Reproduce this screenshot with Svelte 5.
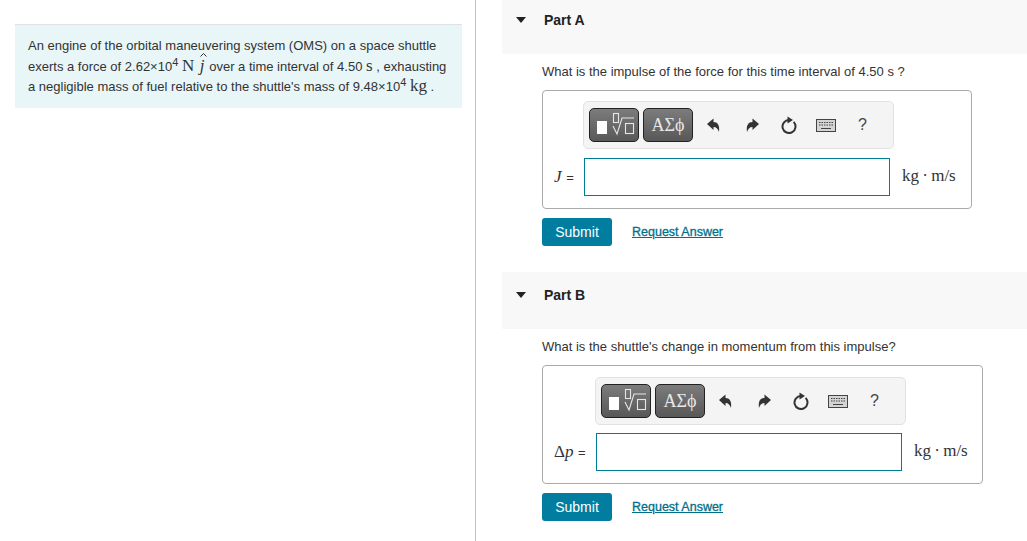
<script lang="ts">
  const parts = [
    {
      name: 'Part A',
      question: 'What is the impulse of the force for this time interval of 4.50 s ?',
      prefix: 'J',
      delta: false,
    },
    {
      name: 'Part B',
      question: "What is the shuttle's change in momentum from this impulse?",
      prefix: 'p',
      delta: true,
    },
  ];
</script>

<div class="page">
  <aside class="left">
    <div class="intro">
      <p>An engine of the orbital maneuvering system (OMS) on a space shuttle</p>
      <p>exerts a force of 2.62×10<sup>4</sup> <span class="m big">N</span> <span class="jhat"><i class="m big">j</i><svg class="hat" width="7" height="4" viewBox="0 0 7 4"><path d="M0.500 3.500L3.500 0.500l3 3" fill="none" stroke="#333" /></svg></span> over a time interval of 4.50 <span class="m big">s</span> , exhausting</p>
      <p>a negligible mass of fuel relative to the shuttle's mass of 9.48×10<sup>4</sup> <span class="m big">kg</span> .</p>
    </div>
  </aside>

  <main class="right">
    {#each parts as part, i}
      <section class="part" class:second={i === 1}>
        <header class="part-head">
          <span class="caret"></span>
          <h2>{part.name}</h2>
        </header>
        <p class="question">{part.question}</p>
        <div class="answer">
          <div class="toolbar">
            <button class="tool-btn templates" type="button" aria-label="Templates">
              <svg width="46" height="32" viewBox="0 0 46 32">
                <rect x="6" y="12" width="10" height="13" fill="#fff" />
                <g fill="none" stroke="#e6e6e6" stroke-width="1.100">
                  <rect x="22.500" y="4.500" width="5" height="9" />
                  <path d="M22 17l4 8 5-16h12" />
                  <rect x="34.500" y="14.500" width="8" height="10" />
                </g>
              </svg>
            </button>
            <button class="tool-btn greek" type="button">ΑΣϕ</button>
            <div class="tools">
              <svg class="undo" width="16" height="16" viewBox="0 0 16 16">
                <path d="M1 7l6.500-5.500v3.500c4 0 6.500 3 5.500 10-1-3-2.500-5-5.500-5v3z" fill="#333" />
              </svg>
              <svg class="redo" width="16" height="16" viewBox="0 0 16 16">
                <path d="M15 7L8.500 1.500V5c-4 0-6.500 3-5.500 10 1-3 2.500-5 5.500-5v3z" fill="#333" />
              </svg>
              <svg class="reset" width="18" height="18" viewBox="0 0 18 18">
                <path d="M9 4a6.500 6.500 0 1 0 4.600 1.900" fill="none" stroke="#333" stroke-width="2" />
                <path d="M7.500 0.500L13 4 7.500 7.500z" fill="#333" />
              </svg>
              <svg class="keys" width="20" height="13" viewBox="0 0 20 13">
                <rect x="0.500" y="0.500" width="19" height="12" fill="#d4d4d4" stroke="#444" />
                <path d="M3 3.500h14M3 6h14" stroke="#444" stroke-dasharray="1.500 1" />
                <path d="M5 9.500h10" stroke="#444" />
              </svg>
              <span class="help">?</span>
            </div>
          </div>
          <div class="entry">
            <label class="prefix">
              {#if part.delta}<span class="m delta">Δ</span>{/if}<i class="m">{part.prefix}</i> =
            </label>
            <div class="field"></div>
            <span class="unit m">kg · m/s</span>
          </div>
        </div>
        <div class="actions">
          <button class="submit" type="button">Submit</button>
          <a class="request" href="#request">Request Answer</a>
        </div>
      </section>
    {/each}
  </main>
</div>

<style>
  :global(body) {
    margin: 0;
    background: #fff;
    overflow: hidden;
  }

  .page {
    display: flex;
    width: 1027px;
    height: 541px;
    overflow: hidden;
    font-family: "Liberation Sans", Arial, sans-serif;
    color: #333;
  }

  .left {
    box-sizing: border-box;
    width: 476px;
    flex-shrink: 0;
    padding: 24px 13px 0 15px;
    border-right: 1px solid #c4c4c4;
  }

  .intro {
    box-sizing: border-box;
    height: 84px;
    padding: 11px 13px 0;
    background: #e9f6f8;
    border-top: 1px solid #dde3e4;
    font-size: 13px;
    line-height: 20.500px;
  }

  .intro p {
    margin: 0;
    white-space: nowrap;
    height: 20.500px;
  }

  sup {
    font-size: 11px;
    line-height: 0;
    vertical-align: 5px;
  }

  .m {
    font-family: "Liberation Serif", "Times New Roman", serif;
  }

  .big {
    font-size: 17px;
    line-height: 0;
  }

  .jhat {
    position: relative;
    display: inline-block;
    padding: 0 1px 0 2px;
    line-height: 0;
  }

  .hat {
    position: absolute;
    left: 2px;
    top: -13px;
  }

  .right {
    flex: 1;
    padding-left: 26px;
    min-width: 0;
  }

  .part-head {
    display: flex;
    height: 54px;
    padding: 13px 0 0 14px;
    box-sizing: border-box;
    background: #f8f8f8;
  }

  .second {
    margin-top: 26px;
  }

  .second .part-head {
    height: 57px;
    padding-top: 16px;
  }

  .caret {
    width: 0;
    height: 0;
    margin-top: 4px;
    border-left: 5.500px solid transparent;
    border-right: 5.500px solid transparent;
    border-top: 6px solid #222;
  }

  h2 {
    margin: 0 0 0 18px;
    font-size: 14px;
    line-height: 15px;
    font-weight: 700;
    color: #222;
  }

  .question {
    margin: 10px 0 0 40px;
    font-size: 13px;
    line-height: 15px;
  }

  .answer {
    box-sizing: border-box;
    width: 430px;
    height: 119px;
    margin: 11px 0 0 40px;
    padding: 10px 0 0 11px;
    border: 1px solid #aaa;
    border-radius: 4px;
  }

  .second .answer {
    width: 441px;
    padding-top: 11px;
  }

  .toolbar {
    box-sizing: border-box;
    display: flex;
    align-items: center;
    width: 311px;
    height: 48px;
    margin-left: 29px;
    padding-left: 5px;
    background: #f4f4f4;
    border: 1px solid #e2e2e2;
    border-radius: 5px;
  }

  .second .toolbar {
    margin-left: 41px;
  }

  .tool-btn {
    box-sizing: border-box;
    width: 50px;
    height: 34px;
    margin-right: 4px;
    padding: 0;
    display: flex;
    align-items: center;
    justify-content: center;
    border: 1px solid #222;
    border-radius: 5px;
    background: linear-gradient(#7c7c7c, #585858);
    color: #e8e8e8;
  }

  .greek {
    font-family: "Liberation Serif", serif;
    font-size: 18px;
  }

  .tools {
    display: flex;
    align-items: center;
    margin-left: 9px;
  }

  .redo {
    margin-left: 22px;
  }

  .reset {
    margin-left: 20px;
  }

  .keys {
    margin-left: 18px;
  }

  .help {
    margin-left: 22px;
    font-size: 16px;
    color: #444;
  }

  .entry {
    display: flex;
    align-items: center;
    height: 38px;
    margin-top: 9px;
  }

  .second .entry {
    margin-top: 8px;
  }

  .prefix {
    width: 30px;
    font-size: 13px;
    word-spacing: 1px;
    white-space: nowrap;
  }

  .prefix .m {
    font-size: 17px;
  }

  .second .prefix {
    width: 42px;
  }

  .field {
    box-sizing: border-box;
    width: 306px;
    height: 38px;
    background: #fff;
    border: 1px solid #007d96;
  }

  .unit {
    margin: -2px 0 0 12px;
    font-size: 17px;
    word-spacing: -1px;
    white-space: nowrap;
  }

  .actions {
    display: flex;
    align-items: center;
    margin: 9px 0 0 40px;
  }

  .submit {
    width: 70px;
    height: 28px;
    padding: 0;
    border: none;
    border-radius: 3px;
    background: #007d9f;
    color: #fff;
    font-family: inherit;
    font-size: 14px;
  }

  .request {
    margin-left: 20px;
    font-size: 12.500px;
    color: #00708a;
    text-decoration: underline;
    -webkit-text-stroke: 0.3px #00708a;
  }
</style>
